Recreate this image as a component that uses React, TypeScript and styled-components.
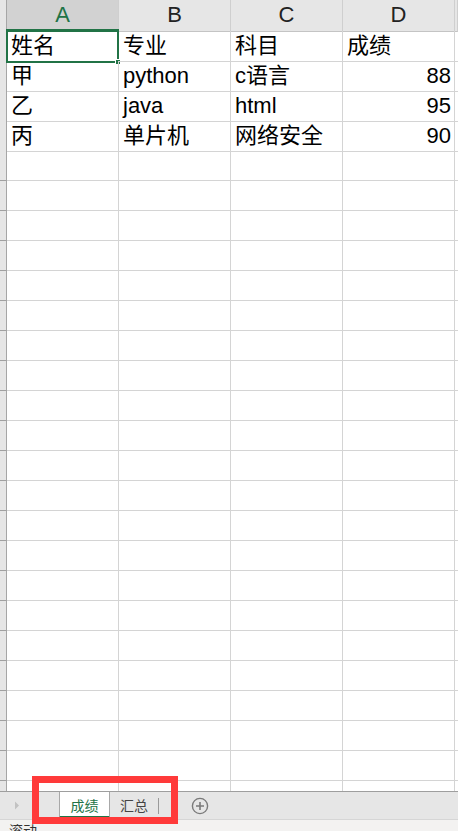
import React from "react";
import styled, { createGlobalStyle } from "styled-components";

const Global = createGlobalStyle`
  html, body { margin: 0; padding: 0; background: #fff; overflow: hidden; }
  * { box-sizing: border-box; }
`;

const FONT = `"Liberation Sans", "Noto Sans CJK SC", Arial, sans-serif`;
const COLS = "7px 112px 112px 112px 112px 1fr";

const Page = styled.div`
  position: relative;
  width: 458px;
  height: 831px;
  display: flex;
  flex-direction: column;
  font-family: ${FONT};
  overflow: hidden;
`;

const Sheet = styled.div`
  height: 791px;
  overflow: hidden;
  flex: none;
`;

const HeaderRow = styled.div`
  display: grid;
  grid-template-columns: ${COLS};
  height: 31px;
`;

const Corner = styled.div`
  background: #e6e6e6;
  border-right: 1px solid #a6a6a6;
  border-bottom: 1px solid #bdbdbd;
`;

const ColHead = styled.div<{ $active?: boolean }>`
  background: ${(p) => (p.$active ? "#d2d2d2" : "#e6e6e6")};
  border-right: 1px solid #cfcfcf;
  border-bottom: ${(p) => (p.$active ? "2px solid #217346" : "1px solid #c4c4c4")};
  color: ${(p) => (p.$active ? "#217346" : "#222")};
  font-size: 22px;
  line-height: 30px;
  text-align: center;
`;

const Row = styled.div`
  display: grid;
  grid-template-columns: ${COLS};
  height: 30px;
`;

const RowHead = styled.div`
  background: #e6e6e6;
  border-right: 1px solid #a6a6a6;
  border-bottom: 1px solid #a0a0a0;
`;

const Cell = styled.div<{ $num?: boolean }>`
  position: relative;
  border-right: 1px solid #d4d4d4;
  border-bottom: 1px solid #d4d4d4;
  font-size: 22px;
  line-height: 30px;
  color: #000;
  padding: 0 ${(p) => (p.$num ? "3px" : "0")} 0 ${(p) => (p.$num ? "0" : "4px")};
  text-align: ${(p) => (p.$num ? "right" : "left")};
  white-space: nowrap;
`;

const Selection = styled.div`
  position: absolute;
  left: -1px;
  top: -2px;
  right: -1px;
  bottom: -2px;
  border: 2px solid #217346;
  pointer-events: none;
`;

const Handle = styled.div`
  position: absolute;
  right: -4px;
  bottom: -4px;
  width: 6px;
  height: 6px;
  background: #217346;
  border: 1px solid #fff;
`;

const TabBar = styled.div`
  height: 28px;
  flex: none;
  background: #e6e6e6;
  border-top: 1px solid #9e9e9e;
  display: flex;
  align-items: stretch;
`;

const Arrow = styled.div`
  width: 59px;
  display: flex;
  align-items: center;
  padding-left: 14px;
`;

const Tab = styled.div<{ $active?: boolean }>`
  width: ${(p) => (p.$active ? "51px" : "48px")};
  background: ${(p) => (p.$active ? "#fff" : "transparent")};
  border-left: ${(p) => (p.$active ? "1px solid #a8a8a8" : "none")};
  border-right: ${(p) => (p.$active ? "1px solid #a8a8a8" : "none")};
  border-bottom: ${(p) => (p.$active ? "3px solid #217346" : "3px solid transparent")};
  color: ${(p) => (p.$active ? "#217346" : "#444")};
  font-size: 14px;
  display: flex;
  align-items: center;
  justify-content: center;
  padding-top: 2px;
  position: relative;
`;

const TabSep = styled.div`
  width: 1px;
  background: #9a9a9a;
  margin: 6px 0 5px;
`;

const AddBtn = styled.div`
  width: 60px;
  display: flex;
  align-items: center;
  justify-content: center;
  padding-left: 22px;
`;

const Status = styled.div`
  flex: none;
  height: 24px;
  background: #f3f2f1;
  border-top: 1px solid #d6d6d6;
  font-size: 14px;
  color: #333;
  padding: 2px 0 0 9px;
  line-height: 18px;
`;

const Annotation = styled.div`
  position: absolute;
  left: 32px;
  top: 776px;
  width: 146px;
  height: 48px;
  border: 7px solid #ff3a3a;
  pointer-events: none;
`;

type CellData = { v: string; num?: boolean };
const data: CellData[][] = [
  [{ v: "姓名" }, { v: "专业" }, { v: "科目" }, { v: "成绩" }],
  [{ v: "甲" }, { v: "python" }, { v: "c语言" }, { v: "88", num: true }],
  [{ v: "乙" }, { v: "java" }, { v: "html" }, { v: "95", num: true }],
  [{ v: "丙" }, { v: "单片机" }, { v: "网络安全" }, { v: "90", num: true }],
];

const TOTAL_ROWS = 26;

export default function App() {
  const rows = Array.from({ length: TOTAL_ROWS }, (_, i) => data[i] || [{ v: "" }, { v: "" }, { v: "" }, { v: "" }]);
  return (
    <Page>
      <Global />
      <Sheet>
        <HeaderRow>
          <Corner />
          <ColHead $active>A</ColHead>
          <ColHead>B</ColHead>
          <ColHead>C</ColHead>
          <ColHead>D</ColHead>
          <ColHead />
        </HeaderRow>
        {rows.map((r, ri) => (
          <Row key={ri}>
            <RowHead />
            {r.map((c, ci) => (
              <Cell key={ci} $num={c.num}>
                {c.v}
                {ri === 0 && ci === 0 && (
                  <Selection>
                    <Handle />
                  </Selection>
                )}
              </Cell>
            ))}
            <Cell />
          </Row>
        ))}
      </Sheet>
      <TabBar>
        <Arrow>
          <svg width="6" height="9" viewBox="0 0 6 9">
            <path d="M1 0.5 L5 4.5 L1 8.5 Z" fill="#c2c2c2" />
          </svg>
        </Arrow>
        <Tab $active>成绩</Tab>
        <Tab>汇总</Tab>
        <TabSep />
        <AddBtn>
          <svg width="18" height="18" viewBox="0 0 18 18">
            <circle cx="9" cy="9" r="7.6" fill="none" stroke="#7a7a7a" strokeWidth="1.4" />
            <path d="M9 5 V13 M5 9 H13" stroke="#7a7a7a" strokeWidth="1.6" />
          </svg>
        </AddBtn>
      </TabBar>
      <Status>滚动</Status>
      <Annotation />
    </Page>
  );
}
